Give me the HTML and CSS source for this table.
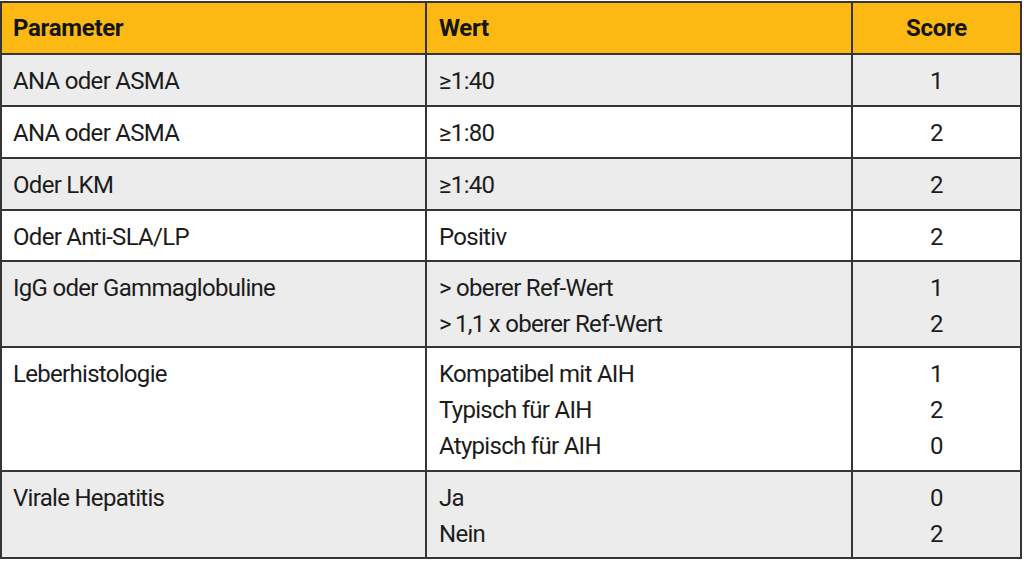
FILE: index.html
```html
<!DOCTYPE html>
<html lang="de">
<head>
<meta charset="utf-8">
<link rel="stylesheet" href="styles.css">
</head>
<body>
<div class="table">
  <div class="cell head">Parameter</div>
  <div class="cell head">Wert</div>
  <div class="cell head score">Score</div>

  <div class="cell gray">ANA oder ASMA</div>
  <div class="cell gray">≥1:40</div>
  <div class="cell gray score">1</div>

  <div class="cell">ANA oder ASMA</div>
  <div class="cell">≥1:80</div>
  <div class="cell score">2</div>

  <div class="cell gray">Oder LKM</div>
  <div class="cell gray">≥1:40</div>
  <div class="cell gray score">2</div>

  <div class="cell">Oder Anti-SLA/LP</div>
  <div class="cell">Positiv</div>
  <div class="cell score">2</div>

  <div class="cell gray">IgG oder Gammaglobuline</div>
  <div class="cell gray"><div>&gt; oberer Ref-Wert</div><div>&gt;&thinsp;1,1&thinsp;x oberer Ref-Wert</div></div>
  <div class="cell gray score"><div>1</div><div>2</div></div>

  <div class="cell">Leberhistologie</div>
  <div class="cell"><div>Kompatibel mit AIH</div><div>Typisch für AIH</div><div>Atypisch für AIH</div></div>
  <div class="cell score"><div>1</div><div>2</div><div>0</div></div>

  <div class="cell gray last">Virale Hepatitis</div>
  <div class="cell gray last"><div>Ja</div><div>Nein</div></div>
  <div class="cell gray score last"><div>0</div><div>2</div></div>
</div>
</body>
</html>
```
FILE: styles.css
```css
html, body {
  margin: 0;
  padding: 0;
  background: #ffffff;
}
body {
  padding-top: 1px;
  font-family: Roboto, "Liberation Sans", sans-serif;
  color: #1c1c1c;
}
.table {
  width: 1022px;
  box-sizing: border-box;
  border: 2px solid #353535;
  display: grid;
  grid-template-columns: 425px 426px 167px;
  grid-template-rows: 52px 52px 52px 52px 51px 86px 124px 85px;
}
.cell {
  box-sizing: border-box;
  border-bottom: 2px solid #353535;
  border-right: 2px solid #353535;
  padding: 8px 12px 0 11px;
  font-size: 24px;
  line-height: 36px;
  letter-spacing: -0.7px;
  background: #ffffff;
}
.cell:nth-child(3n+2) {
  padding-left: 12px;
}
.cell.score {
  border-right: none;
  text-align: center;
  padding-left: 0;
  padding-right: 0;
}
.cell.gray {
  background: #ececec;
}
.cell.head {
  background: #fdb913;
  font-weight: 700;
  padding-top: 7px;
  color: #141414;
  letter-spacing: -0.3px;
}
.cell.last {
  border-bottom: none;
}
```
